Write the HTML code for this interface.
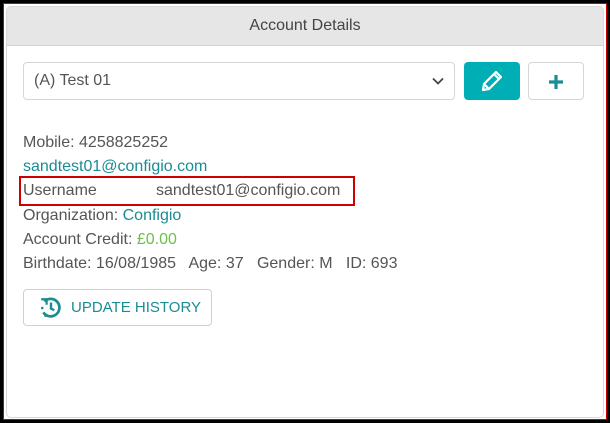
<!DOCTYPE html>
<html><head><style>
*{box-sizing:border-box;margin:0;padding:0}
body{width:610px;height:423px;background:#fff;font-family:"Liberation Sans",sans-serif;position:relative;overflow:hidden}
.outer{position:absolute;left:0;top:0;width:610px;height:423px;border:3px solid #000;box-shadow:inset 0 0 0 1px #c00}
.panel{position:absolute;left:6px;top:6px;width:598px;height:412px;border:1px solid #d8d8d8;border-radius:5px;overflow:hidden}
.hdr{height:39px;background:#e6e6e6;border-bottom:1px solid #d4d4d4;text-align:center;line-height:38px;font-size:16px;color:#444}
.sel{position:absolute;left:23px;top:62px;width:432px;height:38px;border:1px solid #d6d6d6;border-radius:4px;font-size:16px;color:#555;line-height:36px;padding-left:10px}
.btn{position:absolute;top:62px;height:38px;border-radius:4px}
.t{position:absolute;left:23px;font-size:16px;color:#555;white-space:nowrap}
.teal{color:#1a8c93}
</style></head><body>
<div class="outer"></div>
<div class="panel"><div class="hdr">Account Details</div></div>
<div class="sel">(A) Test 01
<svg style="position:absolute;right:10px;top:14px" width="12" height="8" viewBox="0 0 12 8"><path d="M1 1.5 6 6.5 11 1.5" fill="none" stroke="#444" stroke-width="1.8"/></svg></div>
<div class="btn" style="left:464px;width:56px;background:#00aeb6">
<svg style="position:absolute;left:16px;top:7px" width="24" height="24" viewBox="0 0 24 24"><path d="M3 21 L4 15 L16 3 L21 8 L9 20 Z M14 5 L19 10 M4 15 L9 20" fill="none" stroke="#fff" stroke-width="2.2" stroke-linejoin="round"/></svg></div>
<div class="btn" style="left:528px;width:56px;border:1px solid #d6d6d6">
<svg style="position:absolute;left:19px;top:11px" width="16" height="16" viewBox="0 0 16 16"><path d="M8 1V15M1 8H15" stroke="#1a8c93" stroke-width="3.2"/></svg></div>
<div class="t" style="top:134px">Mobile: 4258825252</div>
<div class="t teal" style="top:158px">sandtest01@configio.com</div>
<div style="position:absolute;left:19px;top:176px;width:336px;height:30px;border:2px solid #c00"></div>
<div class="t" style="top:182px">Username</div>
<div class="t" style="top:182px;left:156px">sandtest01@configio.com</div>
<div class="t" style="top:207px">Organization: <span class="teal">Configio</span></div>
<div class="t" style="top:231px">Account Credit: <span style="color:#6cbf4a">£0.00</span></div>
<div class="t" style="top:255px">Birthdate: 16/08/1985&nbsp;&nbsp; Age: 37&nbsp;&nbsp; Gender: M&nbsp;&nbsp; ID: 693</div>
<div style="position:absolute;left:23px;top:289px;width:189px;height:37px;border:1px solid #d0d0d0;border-radius:4px">
<svg style="position:absolute;left:15px;top:6px" width="24" height="24" viewBox="0 0 22 22"><path d="M5 5A8 8 0 1 1 4 15" fill="none" stroke="#1a8c93" stroke-width="2.5"/><path d="M2 3 L7 3 L7 8" fill="none" stroke="#1a8c93" stroke-width="2"/><path d="M11 6V11.5L14 13" fill="none" stroke="#1a8c93" stroke-width="2.2"/><circle cx="3" cy="11" r="1.2" fill="#1a8c93"/><circle cx="6" cy="18" r="1.2" fill="#1a8c93"/></svg>
<span style="position:absolute;left:47px;top:9px;font-size:15px;color:#1a8c93">UPDATE HISTORY</span></div>
</body></html>
